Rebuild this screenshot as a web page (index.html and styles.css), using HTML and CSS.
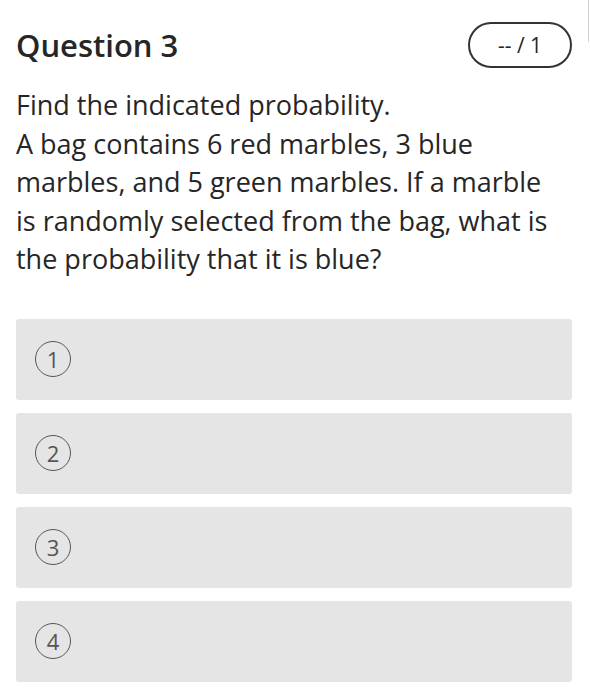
FILE: index.html
```html
<!DOCTYPE html>
<html lang="en">
<head>
    <meta charset="UTF-8">
    <meta name="viewport" content="width=device-width, initial-scale=1.0">
    <title>Question 3</title>
    <link rel="stylesheet" href="styles.css">
</head>
<body>
    <div class="edge"></div>
    <div class="question">
        <div class="question-header">
            <h2 class="question-title">Question 3</h2>
            <div class="score">-- / 1</div>
        </div>

        <div class="question-text">
            <p>Find the indicated probability.</p>
            <p>A bag contains 6 red marbles, 3 blue marbles, and 5 green marbles. If a marble is randomly selected from the bag, what is the probability that it is blue?</p>
        </div>

        <!-- Answer choices -->
        <div class="choices">
            <div class="choice"><span class="choice-num">1</span></div>
            <div class="choice"><span class="choice-num">2</span></div>
            <div class="choice"><span class="choice-num">3</span></div>
            <div class="choice"><span class="choice-num">4</span></div>
        </div>
    </div>
</body>
</html>
```

FILE: styles.css
```css
body {
    font-family: "Open Sans", Arial, sans-serif;
    margin: 0;
    padding: 0;
    color: #262626;
    background: #fff;
}

.edge {
    position: absolute;
    top: 0;
    right: 1px;
    width: 1px;
    height: 42px;
    background: #d0d0d0;
}

.question {
    padding: 22px 18px 0 16px;
}

.question-header {
    display: flex;
    justify-content: space-between;
    align-items: center;
}

.question-title {
    margin: 0;
    font-size: 31px;
    font-weight: 600;
    line-height: 46px;
}

.score {
    width: 100px;
    height: 42px;
    border: 2px solid #333;
    border-radius: 24px;
    display: flex;
    justify-content: center;
    align-items: center;
    font-size: 21px;
}

.question-text {
    margin-top: 18px;
    margin-right: 12px;
    font-size: 27px;
    line-height: 38.5px;
}

.question-text p {
    margin: 0;
}

.choices {
    margin-top: 40px;
    display: flex;
    flex-direction: column;
    gap: 13px;
}

.choice {
    background: #e5e5e5;
    border-radius: 3px;
    height: 81px;
    display: flex;
    align-items: center;
    padding-left: 19px;
}

.choice-num {
    width: 34px;
    height: 34px;
    border: 1.5px solid #555;
    border-radius: 50%;
    display: flex;
    justify-content: center;
    align-items: center;
    font-size: 22px;
    color: #555;
}
```
